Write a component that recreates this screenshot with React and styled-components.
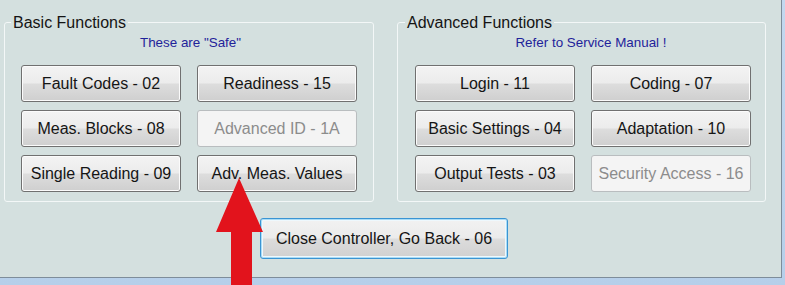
import React from 'react'
import styled, { createGlobalStyle } from 'styled-components'

const basicButtons = [
    { label: 'Fault Codes - 02' },
    { label: 'Readiness - 15' },
    { label: 'Meas. Blocks - 08' },
    { label: 'Advanced ID - 1A', disabled: true },
    { label: 'Single Reading - 09' },
    { label: 'Adv. Meas. Values' },
]

const advancedButtons = [
    { label: 'Login - 11' },
    { label: 'Coding - 07' },
    { label: 'Basic Settings - 04' },
    { label: 'Adaptation - 10' },
    { label: 'Output Tests - 03' },
    { label: 'Security Access - 16', disabled: true },
]

export default function App() {
    return (
        <>
            <GlobalStyle />
            <Screen>
                <Window>
                    <Groups>
                        <GroupBox $width={370} $padLeft={16}>
                            <Legend>Basic Functions</Legend>
                            <Subtitle $shift={3}>These are "Safe"</Subtitle>
                            <ButtonGrid>
                                {basicButtons.map((b) => (
                                    <Button key={b.label} disabled={b.disabled}>
                                        {b.label}
                                    </Button>
                                ))}
                            </ButtonGrid>
                        </GroupBox>
                        <GroupBox $width={369} $padLeft={17}>
                            <Legend>Advanced Functions</Legend>
                            <Subtitle $shift={18}>Refer to Service Manual !</Subtitle>
                            <ButtonGrid>
                                {advancedButtons.map((b) => (
                                    <Button key={b.label} disabled={b.disabled}>
                                        {b.label}
                                    </Button>
                                ))}
                            </ButtonGrid>
                        </GroupBox>
                    </Groups>
                    <Footer>
                        <CloseButton>Close Controller, Go Back - 06</CloseButton>
                    </Footer>
                </Window>
                <Arrow viewBox="0 0 785 285" width="785" height="285">
                    <polygon
                        points="239,178 263,232 252,232 252,285 231,285 231,232 216,232"
                        fill="#e2131c"
                    />
                </Arrow>
            </Screen>
        </>
    )
}

const GlobalStyle = createGlobalStyle`
    html, body {
        margin: 0;
        padding: 0;
        background: #bcd3ec;
    }
    body {
        font-family: "Liberation Sans", Arial, sans-serif;
    }
`
const Screen = styled.div`
    position: relative;
    width: 785px;
    height: 285px;
    overflow: hidden;
    background: linear-gradient(#c3d8ef, #b6cfea);
`
const Window = styled.div`
    box-sizing: border-box;
    width: 782px;
    height: 278px;
    padding: 13px 0 0 4px;
    background: #d4e0df;
    border-right: 1px solid #7e8d9a;
    border-bottom: 1px solid #7e8d9a;
`
const Groups = styled.div`
    display: flex;
    gap: 23px;
`
const GroupBox = styled.fieldset`
    box-sizing: border-box;
    width: ${(p) => p.$width}px;
    min-inline-size: 0;
    margin: 0;
    padding: 3px 16px 9px ${(p) => p.$padLeft}px;
    border: 1px solid #f3f7f7;
    border-radius: 3px;
`
const Legend = styled.legend`
    margin-left: -10px;
    padding: 0 2px;
    font-size: 16px;
    line-height: 19px;
    color: #141414;
`
const Subtitle = styled.div`
    padding-left: ${(p) => p.$shift}px;
    font-size: 13.4px;
    line-height: 16px;
    color: #1f239a;
    text-align: center;
`
const ButtonGrid = styled.div`
    display: grid;
    grid-template-columns: 160px 160px;
    grid-auto-rows: 37px;
    column-gap: 16px;
    row-gap: 8px;
    margin-top: 14px;
`
const Button = styled.button`
    box-sizing: border-box;
    margin: 0;
    padding: 0;
    font-family: "Liberation Sans", Arial, sans-serif;
    font-size: 16px;
    color: #151515;
    white-space: nowrap;
    border: 1px solid #707070;
    border-radius: 3px;
    box-shadow: inset 0 0 0 1px #fbfbfb;
    background: linear-gradient(#f3f3f3 0%, #ececec 48%, #dddddd 52%, #cfcfcf 100%);

    &:disabled {
        color: #8c8c8c;
        border-color: #b9bdbf;
        box-shadow: none;
        background: #f4f4f4;
    }
`
const Footer = styled.div`
    display: flex;
    margin-top: 16px;
    padding-left: 256px;
`
const CloseButton = styled(Button)`
    width: 248px;
    height: 41px;
    border-color: #3a94d3;
    box-shadow: inset 0 0 0 1px #a9dcf6, inset 0 0 0 2px #eef8fd;
    background: linear-gradient(#f2f2f2 0%, #ebebeb 48%, #dcdcdc 52%, #d0d0d0 100%);
`
const Arrow = styled.svg`
    position: absolute;
    left: 0;
    top: 0;
    pointer-events: none;
`
